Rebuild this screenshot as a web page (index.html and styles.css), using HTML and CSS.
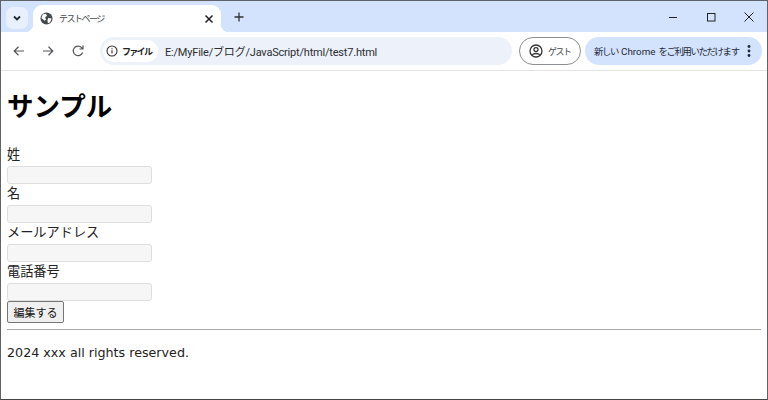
FILE: index.html
```html
<!DOCTYPE html>
<html lang="ja">
<head>
<meta charset="utf-8">
<title>テストページ</title>
<link rel="stylesheet" href="styles.css">
</head>
<body>
<div class="window">
  <div class="tabstrip">
    <button class="tabsearch">
      <svg width="10" height="10" viewBox="0 0 10 10"><path d="M2 3.5 5 6.5 8 3.5" fill="none" stroke="#1f2937" stroke-width="1.8"/></svg>
    </button>
    <div class="tab">
      <svg class="globe" width="13" height="13" viewBox="0 0 14 14"><circle cx="7" cy="7" r="6.5" fill="#45484d"/><path d="M3 2.5 6.5 2 7.5 4 5.5 6 6.5 8 5 9.5 1.5 6.5ZM9 6.5 12.5 7 11 11 8.5 12 8 9Z" fill="#fff"/></svg>
      <span class="tabtitle">テストページ</span>
      <svg class="tabclose" width="10" height="10" viewBox="0 0 10 10"><path d="M1.5 1.5 8.5 8.5M8.5 1.5 1.5 8.5" stroke="#1f1f1f" stroke-width="1.5"/></svg>
    </div>
    <svg class="newtab" width="10" height="10" viewBox="0 0 10 10"><path d="M5 .5v9M.5 5h9" stroke="#303338" stroke-width="1.3"/></svg>
    <div class="winctl">
      <svg width="12" height="12" viewBox="0 0 12 12"><path d="M2 6.5h8" stroke="#222" stroke-width="1"/></svg>
      <svg width="12" height="12" viewBox="0 0 12 12"><rect x="2.5" y="2.5" width="7.5" height="7.5" fill="none" stroke="#222" stroke-width="1"/></svg>
      <svg width="12" height="12" viewBox="0 0 12 12"><path d="M1.5 1.5 10.5 10.5M10.5 1.5 1.5 10.5" stroke="#222" stroke-width="1"/></svg>
    </div>
  </div>
  <div class="toolbar">
    <svg class="navicon" width="14" height="14" viewBox="0 0 14 14"><path d="M12 7H2.5M6.5 2.8 2.2 7l4.3 4.2" fill="none" stroke="#53565b" stroke-width="1.2"/></svg>
    <svg class="navicon" width="14" height="14" viewBox="0 0 14 14"><path d="M2 7h9.5M7.5 2.8 11.8 7l-4.3 4.2" fill="none" stroke="#53565b" stroke-width="1.2"/></svg>
    <svg class="navicon" width="14" height="14" viewBox="-1 0 14 14"><path d="M11.6 8.5A4.8 4.8 0 1 1 10.6 3.6L12 5M12 1.5V5H8.5" fill="none" stroke="#53565b" stroke-width="1.2"/></svg>
    <div class="omnibox">
      <div class="chip">
        <svg width="12" height="12" viewBox="0 0 12 12"><circle cx="6" cy="6" r="5" fill="none" stroke="#333" stroke-width="1.1"/><path d="M6 5.2v3.4M6 3.2v1.1" stroke="#333" stroke-width="1.1"/></svg>
        <span class="chiptext">ファイル</span>
      </div>
      <span class="url">E:/MyFile/ブログ/JavaScript/html/test7.html</span>
    </div>
    <div class="guest">
      <svg width="14" height="14" viewBox="0 0 14 14"><circle cx="7" cy="7" r="6" fill="none" stroke="#333" stroke-width="1.3"/><circle cx="7" cy="5.6" r="2" fill="none" stroke="#333" stroke-width="1.3"/><path d="M3.2 11C4.5 9 9.5 9 10.8 11" fill="none" stroke="#333" stroke-width="1.3"/></svg>
      <span class="guesttext">ゲスト</span>
    </div>
    <div class="update">
      <span class="updatetext">新しい <span class="latin">Chrome</span> をご利用いただけます</span>
      <svg width="4" height="12" viewBox="0 0 4 12"><circle cx="2" cy="1.5" r="1.4" fill="#1f2937"/><circle cx="2" cy="6" r="1.4" fill="#1f2937"/><circle cx="2" cy="10.5" r="1.4" fill="#1f2937"/></svg>
    </div>
  </div>
  <main class="page">
    <h1 class="title">サンプル</h1>
    <form class="form">
      <label class="label">姓</label>
      <input class="field" disabled>
      <label class="label">名</label>
      <input class="field" disabled>
      <label class="label">メールアドレス</label>
      <input class="field" disabled>
      <label class="label">電話番号</label>
      <input class="field" disabled>
      <button class="submit" type="button">編集する</button>
    </form>
    <hr class="rule">
    <p class="copy">2024 xxx all rights reserved.</p>
  </main>
</div>
</body>
</html>
```
FILE: styles.css
```css
* { box-sizing: border-box; }
html, body { margin: 0; padding: 0; }
body { width: 768px; height: 400px; overflow: hidden; background: #fff; }
.window {
  width: 768px; height: 400px;
  border: 1px solid #5f6368; border-bottom-color: #444;
  font-family: "Roboto", "Noto Sans CJK JP", sans-serif;
  display: flex; flex-direction: column;
}
.tabstrip {
  height: 31px; background: #d3e3fd;
  display: flex; align-items: center; flex: none;
}
.tabsearch {
  width: 22px; height: 22px; margin: 2px 0 0 5px; border: 0; padding: 0;
  border-radius: 7px; background: #e9f0fd;
  display: flex; align-items: center; justify-content: center;
}
.tab {
  position: relative;
  width: 188px; height: 27px; margin: 4px 0 0 5px; background: #fff;
  border-radius: 9px 9px 0 0;
  display: flex; align-items: center; padding: 0 4px 0 7px;
}
.tab::before, .tab::after {
  content: ""; position: absolute; bottom: 0; width: 8px; height: 8px;
}
.tab::before { left: -8px; background: radial-gradient(circle at 0 0, transparent 8px, #fff 8.5px); }
.tab::after { right: -8px; background: radial-gradient(circle at 100% 0, transparent 8px, #fff 8.5px); }
.globe { flex: none; }
.tabtitle { font-size: 9px; letter-spacing: -1.5px; color: #45484d; margin-left: 6px; flex: 1; white-space: nowrap; }
.tabclose { margin-right: 3px; flex: none; }
.newtab { margin: 1px 0 0 13px; }
.winctl {
  margin-left: auto; margin-right: 12px;
  display: flex; align-items: center; gap: 26px;
}
.toolbar {
  height: 39px; background: #fff; border-bottom: 1px solid #e3e3e3;
  display: flex; align-items: center; padding-left: 11px; flex: none;
  border-radius: 0 8px 0 0;
}
.navicon { margin-right: 15px; flex: none; }
.omnibox {
  width: 412px; height: 28px; border-radius: 14px; background: #edf2fa; margin-left: 1px;
  display: flex; align-items: center; padding-left: 3px; flex: none;
}
.chip {
  height: 22px; width: 55px; background: #fff; border-radius: 11px; flex: none;
  display: flex; align-items: center; padding-left: 3px; gap: 4px;
  color: #1f1f1f; white-space: nowrap;
}
.chiptext { font-size: 9px; letter-spacing: -1.7px; font-weight: 700; }
.url { font-size: 11px; letter-spacing: -0.2px; color: #2b2d31; margin-left: 7px; white-space: nowrap; }
.guest {
  width: 62px; height: 28px; border: 1px solid #8a8d91; border-radius: 14px; margin-left: 7px;
  display: flex; align-items: center; padding-left: 9px; gap: 5px;
  color: #45484d; flex: none; white-space: nowrap;
}
.guesttext { font-size: 9px; letter-spacing: -1.5px; }
.update {
  width: 177px; height: 28px; background: #d3e3fd; border-radius: 14px; margin-left: 4px;
  display: flex; align-items: center; padding: 0 11px 0 9px; justify-content: space-between;
  color: #1f2937; flex: none; white-space: nowrap;
}
.updatetext { font-size: 9.4px; letter-spacing: -1.35px; word-spacing: 2px; }
.latin { font-size: 9.8px; letter-spacing: 0; }
.page {
  flex: 1; padding: 0 6px; color: #222;
  font-family: "DejaVu Sans", "Noto Sans CJK JP", sans-serif;
}
.title {
  font-size: 26.5px; font-weight: 700; color: #000; line-height: 36px; margin: 16px 0 22px;
  font-family: "Noto Sans CJK JP", sans-serif;
}
.form { display: block; }
.label { display: block; height: 21px; line-height: 18px; font-size: 13.2px; font-family: "Noto Sans CJK JP", sans-serif; }
.field {
  display: block; width: 145px; height: 18px; padding: 0;
  background: #f6f6f6; border: 1px solid #dedede; border-radius: 3px;
}
.submit {
  display: block; width: 57px; height: 22px; padding: 0;
  background: #efefef; border: 1px solid #767676; border-radius: 2px;
  font-size: 11px; color: #111; font-family: "Noto Sans CJK JP", sans-serif;
}
.rule { margin: 6px 0 0; border: 0; border-top: 1px solid #a8a8a8; }
.copy { margin: 14px 0 0; font-size: 12.7px; line-height: 18px; color: #222; }
```
